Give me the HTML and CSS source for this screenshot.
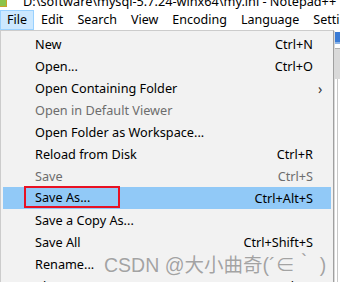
FILE: index.html
```html
<!DOCTYPE html>
<html lang="en">
<head>
    <meta charset="UTF-8">
    <title>my.ini - Notepad++</title>
    <link rel="stylesheet" href="styles.css">
</head>
<body>
    <div class="titlebar">
        <span class="app-icon"></span>
        <span class="title">D:\software\mysql-5.7.24-winx64\my.ini - Notepad++</span>
    </div>
    <div class="menubar">
        <span class="top-item open">File</span>
        <span class="top-item">Edit</span>
        <span class="top-item">Search</span>
        <span class="top-item">View</span>
        <span class="top-item">Encoding</span>
        <span class="top-item">Language</span>
        <span class="top-item">Settings</span>
    </div>
    <div class="workspace">
        <div class="menu">
            <div class="item"><span class="label">New</span><span class="key">Ctrl+N</span><span class="arrow"></span></div>
            <div class="item"><span class="label">Open...</span><span class="key">Ctrl+O</span><span class="arrow"></span></div>
            <div class="item"><span class="label">Open Containing Folder</span><span class="key"></span><span class="arrow">&#x203A;</span></div>
            <div class="item disabled"><span class="label">Open in Default Viewer</span><span class="key"></span><span class="arrow"></span></div>
            <div class="item"><span class="label">Open Folder as Workspace...</span><span class="key"></span><span class="arrow"></span></div>
            <div class="item"><span class="label">Reload from Disk</span><span class="key">Ctrl+R</span><span class="arrow"></span></div>
            <div class="item disabled"><span class="label">Save</span><span class="key">Ctrl+S</span><span class="arrow"></span></div>
            <div class="item active"><span class="label marked">Save As...</span><span class="key">Ctrl+Alt+S</span><span class="arrow"></span></div>
            <div class="item"><span class="label">Save a Copy As...</span><span class="key"></span><span class="arrow"></span></div>
            <div class="item"><span class="label">Save All</span><span class="key">Ctrl+Shift+S</span><span class="arrow"></span></div>
            <div class="item"><span class="label">Rename...</span><span class="key"></span><span class="arrow"></span></div>
            <div class="item"><span class="label">Close</span><span class="key">Ctrl+W</span><span class="arrow"></span></div>
        </div>
        <div class="editor">
            <div class="tool-icon"></div>
            <div class="tab"></div>
            <div class="gutter"></div>
        </div>
    </div>
    <div class="watermark">CSDN @大小曲奇(´∈｀ )</div>
</body>
</html>
```

FILE: styles.css
```css
body { margin: 0; width: 340px; height: 282px; overflow: hidden; background: #fff; font-family: "Noto Sans", "Segoe UI", sans-serif; font-size: 12.7px; color: #000; position: relative; }

.titlebar { height: 10px; overflow: hidden; display: flex; align-items: flex-start; white-space: nowrap; }
.app-icon { flex: none; width: 6px; height: 6px; background: #8bc34a; border-right: 1px solid #c9a227; border-bottom: 1px solid #c9a227; }
.title { margin-left: 16px; font-size: 12.7px; line-height: 16px; margin-top: -7px; }

.menubar { height: 20px; display: flex; align-items: stretch; overflow: hidden; white-space: nowrap; font-size: 12.5px; }
.top-item { flex: none; padding: 0 6px; line-height: 18px; border: 1px solid transparent; }
.top-item.open { background: #cce8ff; border-color: #99d1ff; }

.workspace { display: flex; height: 252px; }
.menu { width: 328px; background: #f2f2f2; border: 1px solid #cccccc; border-right-color: #a0a0a0; border-bottom: none; padding: 2px 2px 0; overflow: hidden; box-shadow: 1px 1px 1px rgba(0, 0, 0, 0.15); }
.item { display: flex; align-items: center; height: 22px; padding-left: 32px; }
.label { flex: 1; white-space: nowrap; }
.key { padding-right: 5px; white-space: nowrap; }
.arrow { width: 13px; font-size: 14px; color: #333; }
.item.disabled { color: #6d6d6d; }
.item.active { background: #91c9f7; }
.marked { flex: none; align-self: flex-start; width: 96px; height: 22px; margin: -1px auto 0 -11px; padding-left: 9px; line-height: 18px; border: 2px solid #e81123; box-sizing: border-box; }

.editor { flex: 1; background: #fff; display: flex; flex-direction: column; margin-left: 1px; }
.tool-icon { height: 10px; margin-top: 2px; background: #3a7bd5; border-bottom: 2px solid #8ab4e8; }
.tab { height: 30px; margin-top: 4px; background: #d9d9d9; border-top: 1px solid #b0b0b0; }
.gutter { flex: 1; border-left: 1px solid #c8c8c8; margin-left: 2px; background: #fff; }

.watermark { position: absolute; left: 104px; top: 249px; font-family: "Liberation Sans", "Noto Sans CJK SC", sans-serif; font-size: 19.5px; color: #a3a3a3; text-shadow: 0 0 1px #fff; white-space: nowrap; }
```
